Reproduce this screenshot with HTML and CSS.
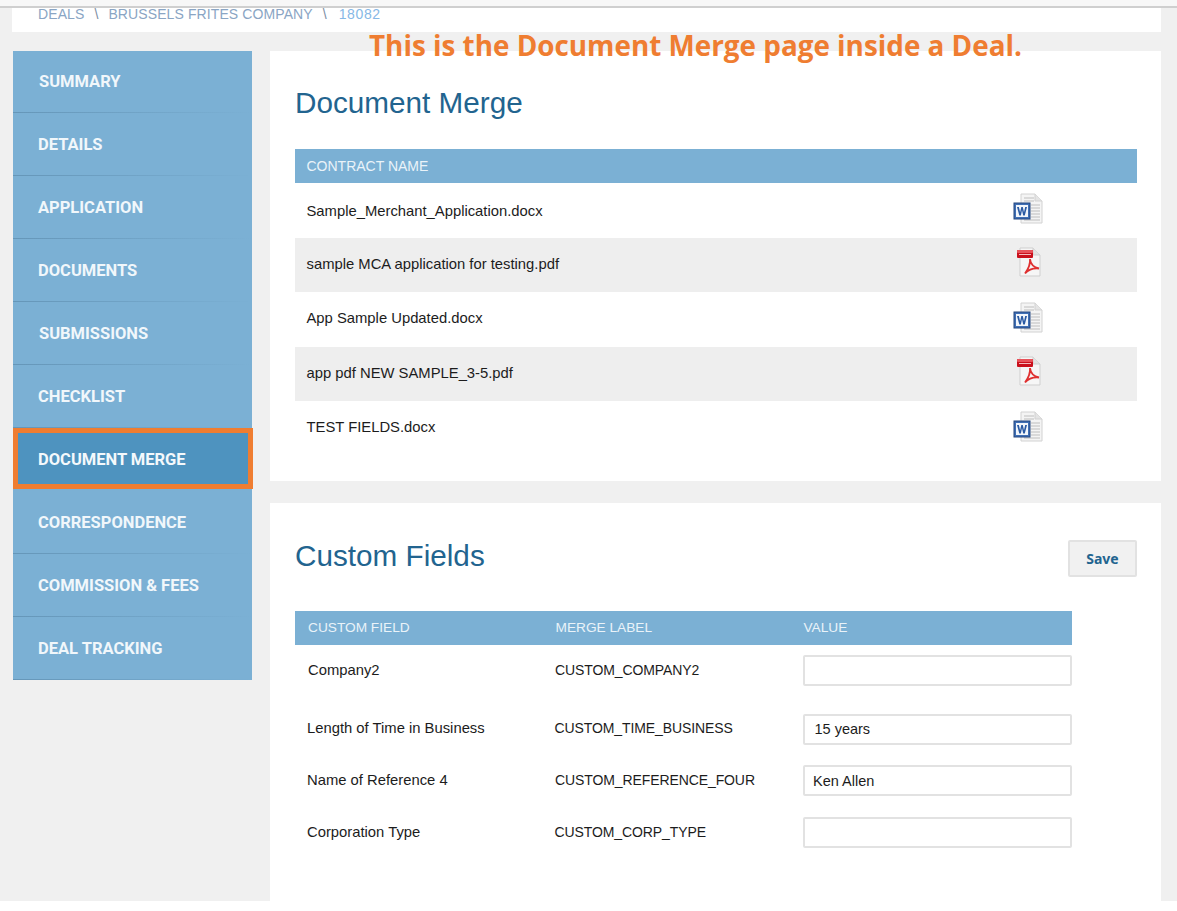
FILE: index.html
```html
<!DOCTYPE html>
<html lang="en">
<head>
<meta charset="utf-8">
<title>Document Merge</title>
<link rel="stylesheet" href="styles.css">
</head>
<body>
<svg class="defs" width="0" height="0" aria-hidden="true">
  <defs>
    <symbol id="word" viewBox="0 0 30 31">
      <path d="M8 1h14l7 7v22H8z" fill="#f4f4f4" stroke="#d2d2d2"/>
      <path d="M22 1v7h7" fill="#e4e4e4" stroke="#d2d2d2"/>
      <path d="M11 5h10M11 8h10M18 12h9M18 15h9M18 18h9M18 21h9M18 24h9M11 27h16" stroke="#bdbdbd" stroke-width="1.2"/>
      <rect x="1" y="10" width="16" height="16" fill="#3f6fb5" stroke="#25477f"/>
      <rect x="3" y="12" width="12" height="12" fill="#f2f6fb"/>
      <path d="M4 14l2.3 8.5h1.6L9 17l1.2 5.5h1.6L14 14h-1.8l-1.2 5.3L9.800 14H8.300l-1.200 5.300L5.900 14z" fill="#2a5aa3"/>
    </symbol>
    <symbol id="pdf" viewBox="0 0 25 30">
      <path d="M4 1h13l7 7v21H4z" fill="#f6f6f6" stroke="#cfcfcf"/>
      <path d="M17 1v7h7" fill="#e2e2e2" stroke="#cfcfcf"/>
      <rect x="1" y="3" width="16" height="8" rx="1" fill="#c9101c"/>
      <rect x="1" y="3" width="16" height="3" rx="1" fill="#e8525a"/>
      <path d="M3 7.500h12" stroke="#f3b9bc"/>
      <path d="M14 12c.5 5 2.500 8 9 9.500-5-.5-10 .5-14 5 3-4 5.500-9 5-14.500z" fill="none" stroke="#df3030" stroke-width="1.800"/>
    </symbol>
  </defs>
</svg>
<div class="page">
  <div class="topline"></div>
  <div class="crumbs">
    <span>DEALS</span><span class="sep">\</span><span>BRUSSELS FRITES COMPANY</span><span class="sep">\</span><span class="crumb-id">18082</span>
  </div>
  <p class="note">This is the Document Merge page inside a Deal.</p>
  <div class="main">
    <nav class="side">
      <a class="nav-item nudge first">SUMMARY</a>
      <a class="nav-item">DETAILS</a>
      <a class="nav-item">APPLICATION</a>
      <a class="nav-item">DOCUMENTS</a>
      <a class="nav-item nudge">SUBMISSIONS</a>
      <a class="nav-item">CHECKLIST</a>
      <a class="nav-item active"><span>DOCUMENT MERGE</span></a>
      <a class="nav-item">CORRESPONDENCE</a>
      <a class="nav-item">COMMISSION &amp; FEES</a>
      <a class="nav-item">DEAL TRACKING</a>
    </nav>
    <div class="content">
      <section class="card merge">
        <h1>Document Merge</h1>
        <div class="thead contracts"><span>CONTRACT NAME</span></div>
        <div class="doc first-doc"><span>Sample_Merchant_Application.docx</span><svg class="ic-word"><use href="#word"/></svg></div>
        <div class="doc alt"><span>sample MCA application for testing.pdf</span><svg class="ic-pdf"><use href="#pdf"/></svg></div>
        <div class="doc"><span>App Sample Updated.docx</span><svg class="ic-word"><use href="#word"/></svg></div>
        <div class="doc alt"><span>app pdf NEW SAMPLE_3-5.pdf</span><svg class="ic-pdf"><use href="#pdf"/></svg></div>
        <div class="doc"><span>TEST FIELDS.docx</span><svg class="ic-word"><use href="#word"/></svg></div>
      </section>
      <section class="card custom">
        <div class="custom-head">
          <h1>Custom Fields</h1>
          <button class="save" type="button">Save</button>
        </div>
        <div class="fields">
          <div class="thead grid"><span>CUSTOM FIELD</span><span>MERGE LABEL</span><span>VALUE</span></div>
          <div class="grid row r1"><span>Company2</span><span class="label">CUSTOM_COMPANY2</span><input type="text" value=""></div>
          <div class="grid row r2"><span>Length of Time in Business</span><span class="label">CUSTOM_TIME_BUSINESS</span><input type="text" value="15 years"></div>
          <div class="grid row r3"><span>Name of Reference 4</span><span class="label">CUSTOM_REFERENCE_FOUR</span><input type="text" value="Ken Allen"></div>
          <div class="grid row r4"><span>Corporation Type</span><span class="label">CUSTOM_CORP_TYPE</span><input type="text" value=""></div>
        </div>
      </section>
    </div>
  </div>
</div>
</body>
</html>
```
FILE: styles.css
```css
* { box-sizing: border-box; }
html, body { margin: 0; padding: 0; background: #fff; }
body { font-family: "Liberation Sans", Arial, sans-serif; color: #1c1c1c; }
.defs { position: absolute; }
.page { position: relative; height: 901px; background: #f0f0f0; overflow: hidden; }
.topline { height: 8px; background: #f7f7f7; border-bottom: 2px solid #cfcfcf; }
.crumbs { display: flex; align-items: flex-start; margin: 0 16px 0 12px; height: 24px; padding-left: 26px; background: #fff; font-size: 14px; line-height: 12px; letter-spacing: .1px; color: #8aa5c4; }
.crumb-id { margin-left: 2px; color: #86b8e6; letter-spacing: .6px; }
.sep { margin: 0 10px; color: #7d8ea3; }
.note { position: absolute; left: 369px; top: 25px; margin: 0; font: 700 27.850px/40px "Open Sans", sans-serif; color: #ef7d31; white-space: nowrap; }
.main { display: flex; gap: 18px; margin: 19px 16px 0 13px; }
.side { width: 239px; flex: none; align-self: flex-start; background: #7bb0d4; }
.nav-item { display: flex; align-items: center; height: 63px; padding: 1px 0 0 25px; border-bottom: 1px solid #6a9fc3; border-image: linear-gradient(to right, #6596b8, #7bb0d4) 1; background: #7bb0d4; color: #f1f7fb; font: 700 16.500px/20px "Roboto", sans-serif; }
.first { height: 62px; }
.nudge { padding-left: 26px; }
.nav-item.active { margin-right: -1px; border: 5px solid #ef7d31; border-image: none; padding: 2px 0 0 20px; background: #4e93bf; color: #f4f9fc; height: 61px; margin-bottom: 2px; }
.content { flex: 1; display: flex; flex-direction: column; gap: 22px; }
.card { background: #fff; padding: 0 24px 0 25px; }
.merge { height: 430px; padding-top: 33px; }
.custom { height: 398px; padding-top: 37px; }
h1 { margin: 0; font: 400 29.700px/38px "Liberation Sans", sans-serif; color: #22648f; }
.thead { background: #7bb0d4; color: #eaf3f9; font-size: 14px; height: 34px; align-items: center; padding-bottom: 1px; }
.contracts { display: flex; margin-top: 27px; padding-left: 11.500px; }
.doc { display: flex; align-items: center; justify-content: space-between; height: 54.500px; padding: 0 94px 2px 11.500px; font-size: 14.800px; }
.first-doc span { margin-top: 3px; }
.alt { background: #eee; }
.ic-word { width: 30px; height: 31px; margin-bottom: 1px; }
.ic-pdf { width: 25px; height: 30px; margin: 0 2px 3px 0; }
.custom-head { display: flex; justify-content: space-between; align-items: flex-start; height: 71px; }
.custom h1 { margin-top: -3px; }
.save { width: 69px; height: 37px; border: 2px solid #e2e2e2; border-radius: 2px; background: #f1f1f1; color: #22648f; font: 700 14px/1 "Noto Sans", sans-serif; }
.fields { width: 777px; }
.grid { display: grid; grid-template-columns: 247.500px 248px 269px; padding-left: 13px; align-items: center; }
.thead.grid { font-size: 13.700px; }
.row { font-size: 14.800px; }
.row span { margin-bottom: 2px; }
.row .label { font-size: 14px; letter-spacing: -.1px; }
.r1 { height: 51px; grid-template-columns: 247px 247.500px 269px; }
.r2 { height: 52px; margin-top: 7px; padding-left: 12px; }
.r3 { height: 51px; padding-left: 12px; grid-template-columns: 248px 248px 269px; }
.r3 input { padding-left: 8px; }
.r4 { height: 53px; padding-left: 12px; }
input { width: 269px; height: 31px; padding: 0 10px; border: 2px solid #e2e2e2; border-radius: 2px; background: #fff; color: #1c1c1c; font: 14.500px "Liberation Sans", sans-serif; }
```
